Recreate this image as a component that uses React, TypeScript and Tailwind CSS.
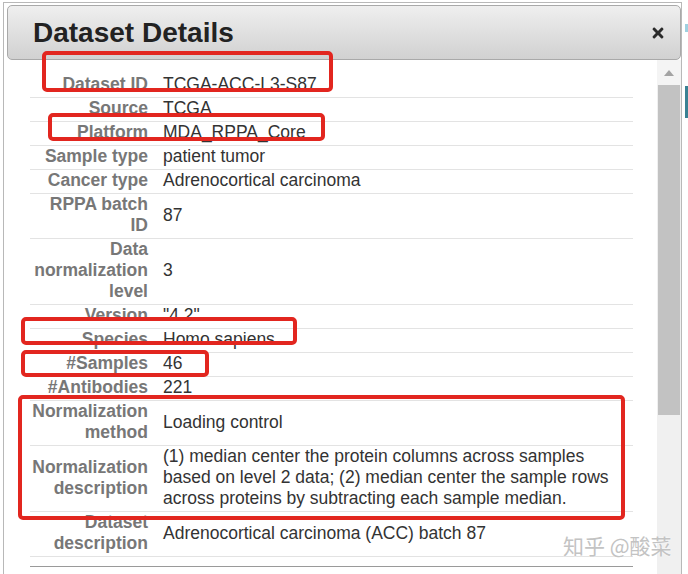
import React from "react";
import { FaTimes } from "react-icons/fa";

const rows: [string, string][] = [
  ["Dataset ID", "TCGA-ACC-L3-S87"],
  ["Source", "TCGA"],
  ["Platform", "MDA_RPPA_Core"],
  ["Sample type", "patient tumor"],
  ["Cancer type", "Adrenocortical carcinoma"],
  ["RPPA batch ID", "87"],
  ["Data normalization level", "3"],
  ["Version", '"4.2"'],
  ["Species", "Homo sapiens"],
  ["#Samples", "46"],
  ["#Antibodies", "221"],
  ["Normalization method", "Loading control"],
  [
    "Normalization description",
    "(1) median center the protein columns across samples based on level 2 data; (2) median center the sample rows across proteins by subtracting each sample median.",
  ],
  ["Dataset description", "Adrenocortical carcinoma (ACC) batch 87"],
];

function RedBox({ className }: { className: string }) {
  return (
    <div
      className={
        "pointer-events-none absolute rounded-[5px] border-[4px] border-[#e2261f] " +
        className
      }
    />
  );
}

export default function App() {
  return (
    <div className="relative h-[574px] w-[688px] overflow-hidden bg-white font-['Liberation_Sans',Arial,sans-serif]">
      <div className="ml-[3px] mt-[2px] flex h-[620px] w-[679px] flex-col border border-[#b8b8b8] bg-white">
        {/* title bar */}
        <div className="ml-[3px] mt-[2px] flex h-[55px] shrink-0 items-center justify-between rounded-[5px] border border-[#a9a9a9] bg-gradient-to-b from-[#efefef] to-[#d1d1d1] pl-[25px] pr-[14px]">
          <div className="text-[28px] font-bold leading-none text-[#222]">
            Dataset Details
          </div>
          <FaTimes className="text-[#2a2a2a]" size={16} />
        </div>

        {/* body */}
        <div className="flex flex-1">
          <div className="flex-1 pl-[26px] pr-[24px] pt-[14px]">
            {rows.map(([label, value]) => (
              <div
                key={label}
                className="flex items-center border-b border-[#e3e3e3] pb-[2px] text-[17.5px] leading-[21px]"
              >
                <div className="w-[118px] shrink-0 text-right font-bold text-[#777]">
                  {label}
                </div>
                <div className="pl-[15px] text-[#333]">{value}</div>
              </div>
            ))}
            <div className="mt-[9px] h-px bg-[#9a9a9a]" />
          </div>

          {/* scrollbar */}
          <div className="flex w-[24px] shrink-0 flex-col bg-[#f0f0f0]">
            <div className="flex h-[25px] items-center justify-center bg-[#f4f4f4]">
              <svg width="10" height="6" viewBox="0 0 10 6">
                <path d="M0 6 L5 0 L10 6 Z" fill="#a3a3a3" />
              </svg>
            </div>
            <div className="mx-[1px] h-[330px] bg-[#c2c2c2]" />
          </div>
        </div>
      </div>

      {/* background page bits at right edge */}
      <div className="absolute left-[685px] top-[24px] h-[8px] w-[3px] bg-[#9fd0e0]" />
      <div className="absolute left-[685px] top-[86px] h-[32px] w-[3px] bg-[#3a8193]" />

      {/* annotation boxes */}
      <RedBox className="left-[42px] top-[51px] h-[41px] w-[291px]" />
      <RedBox className="left-[48px] top-[113px] h-[28px] w-[277px]" />
      <RedBox className="left-[21px] top-[317px] h-[28px] w-[276px]" />
      <RedBox className="left-[21px] top-[350px] h-[27px] w-[188px]" />
      <RedBox className="left-[18px] top-[395px] h-[125px] w-[607px]" />

      {/* watermark */}
      <div className="absolute left-[563px] top-[532px] font-['Noto_Sans_CJK_SC',sans-serif] text-[21px] leading-[26px] text-[#c3c3c3] [text-shadow:0_0_2px_#fff]">
        知乎 @酸菜
      </div>
    </div>
  );
}
